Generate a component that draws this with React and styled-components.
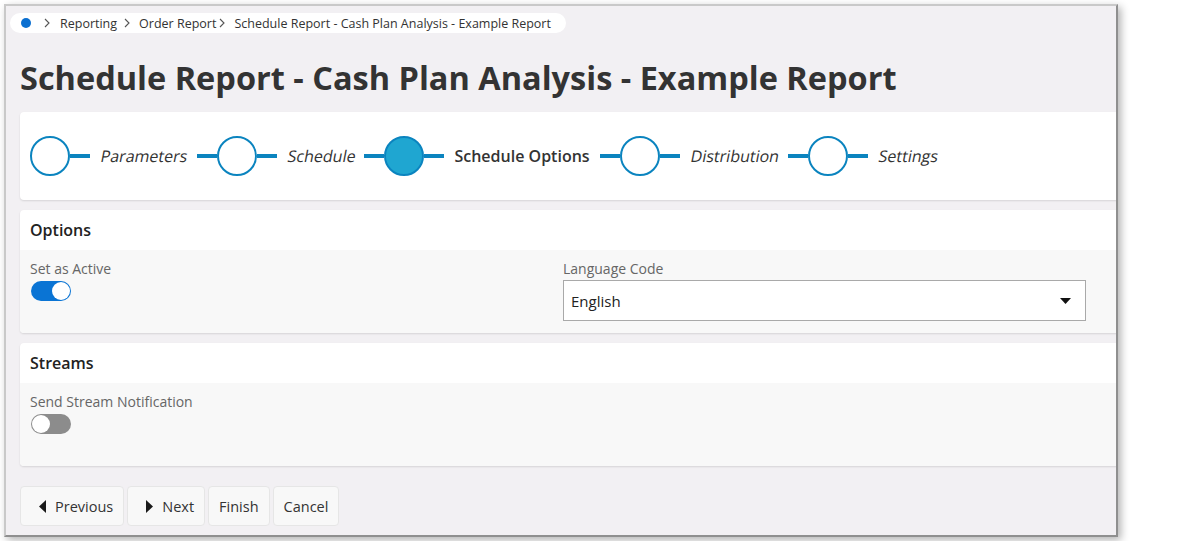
import React from 'react'
import styled, { createGlobalStyle } from 'styled-components'

const GlobalStyle = createGlobalStyle`
    body {
        margin: 0;
        background: #fff;
        font-family: "Open Sans", "Noto Sans", sans-serif;
        color: #333;
    }
`

const Frame = styled.div`
    box-sizing: border-box;
    margin: 4px;
    width: 1114px;
    height: 533px;
    background: #f2f0f3;
    border: 2px solid #c9c9c9;
    border-right-color: #8f8f8f;
    border-bottom-color: #8f8f8f;
    box-shadow: 3px 3px 8px rgba(0, 0, 0, 0.3);
    overflow: hidden;
`

const Page = styled.div`
    width: 1110px;
    padding: 7px 0 0 14px;
    display: flex;
    flex-direction: column;
`

const Breadcrumb = styled.nav`
    align-self: flex-start;
    display: flex;
    align-items: center;
    height: 20px;
    margin-left: -10px;
    padding: 0 15px 0 11px;
    background: #fff;
    border-radius: 10px;
    font-size: 12.5px;
    color: #333;
`

const HomeDot = styled.span`
    width: 10px;
    height: 10px;
    border-radius: 50%;
    background: #0b6fd0;
`

const Crumb = styled.span`
    white-space: nowrap;
`

const ChevronIcon = styled.svg`
    flex: none;
    margin: 0 ${p => p.after}px 0 ${p => p.before}px;
`

const Chevron = ({ before = 7, after = 9 }) => (
    <ChevronIcon width="6" height="10" viewBox="0 0 6 10" before={before} after={after}>
        <path d="M1 1l4 4-4 4" fill="none" stroke="#555" strokeWidth="1.1" />
    </ChevronIcon>
)

const Title = styled.h1`
    margin: 23px 0 0 0;
    font-size: 32.5px;
    line-height: 44px;
    font-weight: 700;
    color: #333;
    white-space: nowrap;
`

const Card = styled.section`
    margin-top: ${p => p.top || 10}px;
    background: #fff;
    border-radius: 4px;
    box-shadow: 0 1px 2px rgba(0, 0, 0, 0.12);
    overflow: hidden;
`

const Stepper = styled.div`
    display: flex;
    align-items: center;
    height: 88px;
    padding-left: 10px;
`

const Step = styled.div`
    display: flex;
    align-items: center;
`

const Line = styled.span`
    width: 20px;
    height: 4px;
    background: #0b84bf;
`

const Circle = styled.span`
    box-sizing: border-box;
    width: 40px;
    height: 40px;
    border-radius: 50%;
    border: 2px solid #0b84bf;
    background: ${p => (p.active ? '#1fa6d1' : '#fff')};
`

const StepLabel = styled.span`
    display: inline-block;
    margin: 0 ${p => (p.active ? 10 : 9)}px 0 ${p => (p.active ? 10 : 11)}px;
    font-size: 16px;
    font-weight: ${p => (p.active ? 600 : 400)};
    transform: ${p => (p.active ? 'none' : 'skewX(-11deg)')};
    color: #333;
`

const CardHeader = styled.h2`
    margin: 0;
    height: 40px;
    padding-left: 10px;
    display: flex;
    align-items: center;
    font-size: 16px;
    font-weight: 600;
    color: #222;
`

const CardBody = styled.div`
    box-sizing: border-box;
    height: 83px;
    padding: 9px 10px;
    background: #f8f8f8;
    display: grid;
    grid-template-columns: 523px 523px;
    column-gap: 10px;
    align-items: start;
`

const Field = styled.div`
    display: flex;
    flex-direction: column;
    align-items: flex-start;
`

const FieldLabel = styled.label`
    font-size: 14px;
    line-height: 20px;
    color: #666;
`

const Toggle = styled.span`
    position: relative;
    margin: 2px 0 0 1px;
    width: 40px;
    height: 20px;
    border-radius: 10px;
    background: ${p => (p.on ? '#0a74d4' : '#8c8c8c')};

    &::after {
        content: '';
        position: absolute;
        top: 1px;
        left: ${p => (p.on ? '21px' : '1px')};
        width: 18px;
        height: 18px;
        border-radius: 50%;
        background: #fff;
    }
`

const Select = styled.div`
    box-sizing: border-box;
    margin-top: 1px;
    width: 523px;
    height: 41px;
    padding: 0 14px 0 7px;
    background: #fff;
    border: 1px solid #a9a9a9;
    display: flex;
    align-items: center;
    justify-content: space-between;
    font-size: 15px;
    color: #222;
`

const Actions = styled.div`
    margin-top: 20px;
    display: flex;
    gap: 3px;
`

const Button = styled.button`
    box-sizing: border-box;
    height: 40px;
    padding: 0 ${p => (p.icon ? '10px 0 18px' : '10px')};
    display: flex;
    align-items: center;
    gap: 9px;
    background: #f8f8f8;
    border: 1px solid #e6e6e6;
    border-radius: 4px;
    font-family: inherit;
    font-size: 14.5px;
    color: #333;
`

const Caret = ({ dir }) => (
    <svg width="7" height="13" viewBox="0 0 7 13">
        <path d={dir === 'left' ? 'M7 0v13L0 6.5z' : 'M0 0v13l7-6.5z'} fill="#1a1a1a" />
    </svg>
)

const steps = ['Parameters', 'Schedule', 'Schedule Options', 'Distribution', 'Settings']

const App = () => {
    return (
        <Frame>
            <GlobalStyle />
            <Page>
                <Breadcrumb>
                    <HomeDot />
                    <Chevron before={13} after={10} />
                    <Crumb>Reporting</Crumb>
                    <Chevron />
                    <Crumb>Order Report</Crumb>
                    <Chevron before={3} />
                    <Crumb>Schedule Report - Cash Plan Analysis - Example Report</Crumb>
                </Breadcrumb>
                <Title>Schedule Report - Cash Plan Analysis - Example Report</Title>
                <Card top={12}>
                    <Stepper>
                        {steps.map((s, i) => (
                            <Step key={s}>
                                {i > 0 && <Line />}
                                <Circle active={i === 2} />
                                <Line />
                                <StepLabel active={i === 2}>{s}</StepLabel>
                            </Step>
                        ))}
                    </Stepper>
                </Card>
                <Card>
                    <CardHeader>Options</CardHeader>
                    <CardBody>
                        <Field>
                            <FieldLabel>Set as Active</FieldLabel>
                            <Toggle on />
                        </Field>
                        <Field>
                            <FieldLabel>Language Code</FieldLabel>
                            <Select>
                                English
                                <svg width="11" height="6" viewBox="0 0 11 6">
                                    <path d="M0 0h11L5.5 6z" fill="#111" />
                                </svg>
                            </Select>
                        </Field>
                    </CardBody>
                </Card>
                <Card>
                    <CardHeader>Streams</CardHeader>
                    <CardBody>
                        <Field>
                            <FieldLabel>Send Stream Notification</FieldLabel>
                            <Toggle />
                        </Field>
                    </CardBody>
                </Card>
                <Actions>
                    <Button icon><Caret dir="left" />Previous</Button>
                    <Button icon><Caret dir="right" />Next</Button>
                    <Button>Finish</Button>
                    <Button>Cancel</Button>
                </Actions>
            </Page>
        </Frame>
    )
}

export default App
